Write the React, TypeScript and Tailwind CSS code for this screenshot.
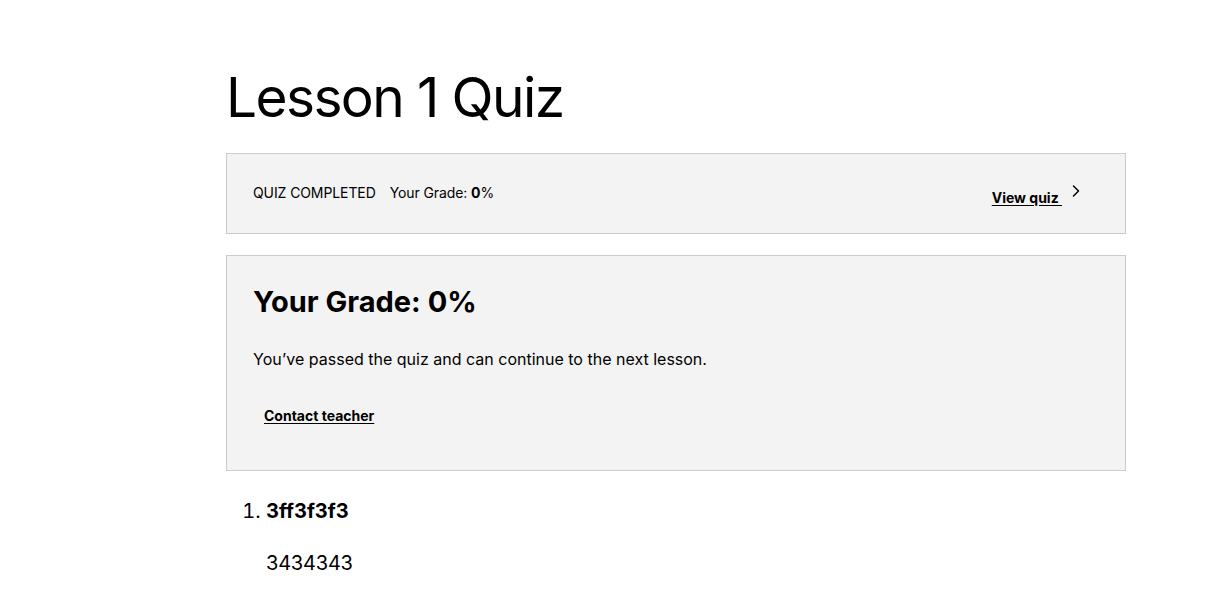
import { ChevronRight } from 'lucide-react';

const App = () => {
  return (
    <div className="min-h-screen bg-white text-black" style={{ fontFamily: 'Inter, "Noto Sans", sans-serif' }}>
      <div className="ml-[226px] w-[900px] pt-[59px]">
        <h1 className="text-[55px] leading-[76px] font-normal tracking-[-1.6px]">Lesson 1 Quiz</h1>

        {/* Status bar */}
        <div className="mt-[18px] h-[81px] border border-[#cccccc] bg-[#f3f3f3] pl-[26px] pr-[39px] flex items-start justify-between">
          <div className="pt-[31px] text-[14px] leading-[16px] flex gap-[14px] tracking-[-0.1px]">
            <span>QUIZ COMPLETED</span>
            <span>
              Your Grade: <span className="font-bold">0</span>%
            </span>
          </div>
          <a href="#" className="pt-[26px] flex items-start gap-[4px] text-[14px] font-bold">
            <span className="mt-[7px] underline underline-offset-2">View quiz&nbsp;</span>
            <ChevronRight size={20} strokeWidth={1.75} className="mt-[1px]" />
          </a>
        </div>

        {/* Result card */}
        <div className="mt-[21px] h-[216px] border border-[#cccccc] bg-[#f3f3f3] px-[26px] pt-[26px]">
          <h2 className="text-[29px] leading-[40px] font-bold">Your Grade: 0%</h2>
          <p className="mt-[25px] text-[16px] leading-[24px]">
            You’ve passed the quiz and can continue to the next lesson.
          </p>
          <a href="#" className="inline-block mt-[34px] ml-[11px] text-[14px] font-bold underline underline-offset-2">
            Contact teacher
          </a>
        </div>

        {/* Questions */}
        <ol className="mt-[25px] list-decimal pl-[40px] text-[20px]">
          <li>
            <span className="font-bold leading-[28px]">3ff3f3f3</span>
            <p className="mt-[23px] leading-[28px] tracking-[-0.2px]">3434343</p>
          </li>
        </ol>
      </div>
    </div>
  );
};

export default App;
